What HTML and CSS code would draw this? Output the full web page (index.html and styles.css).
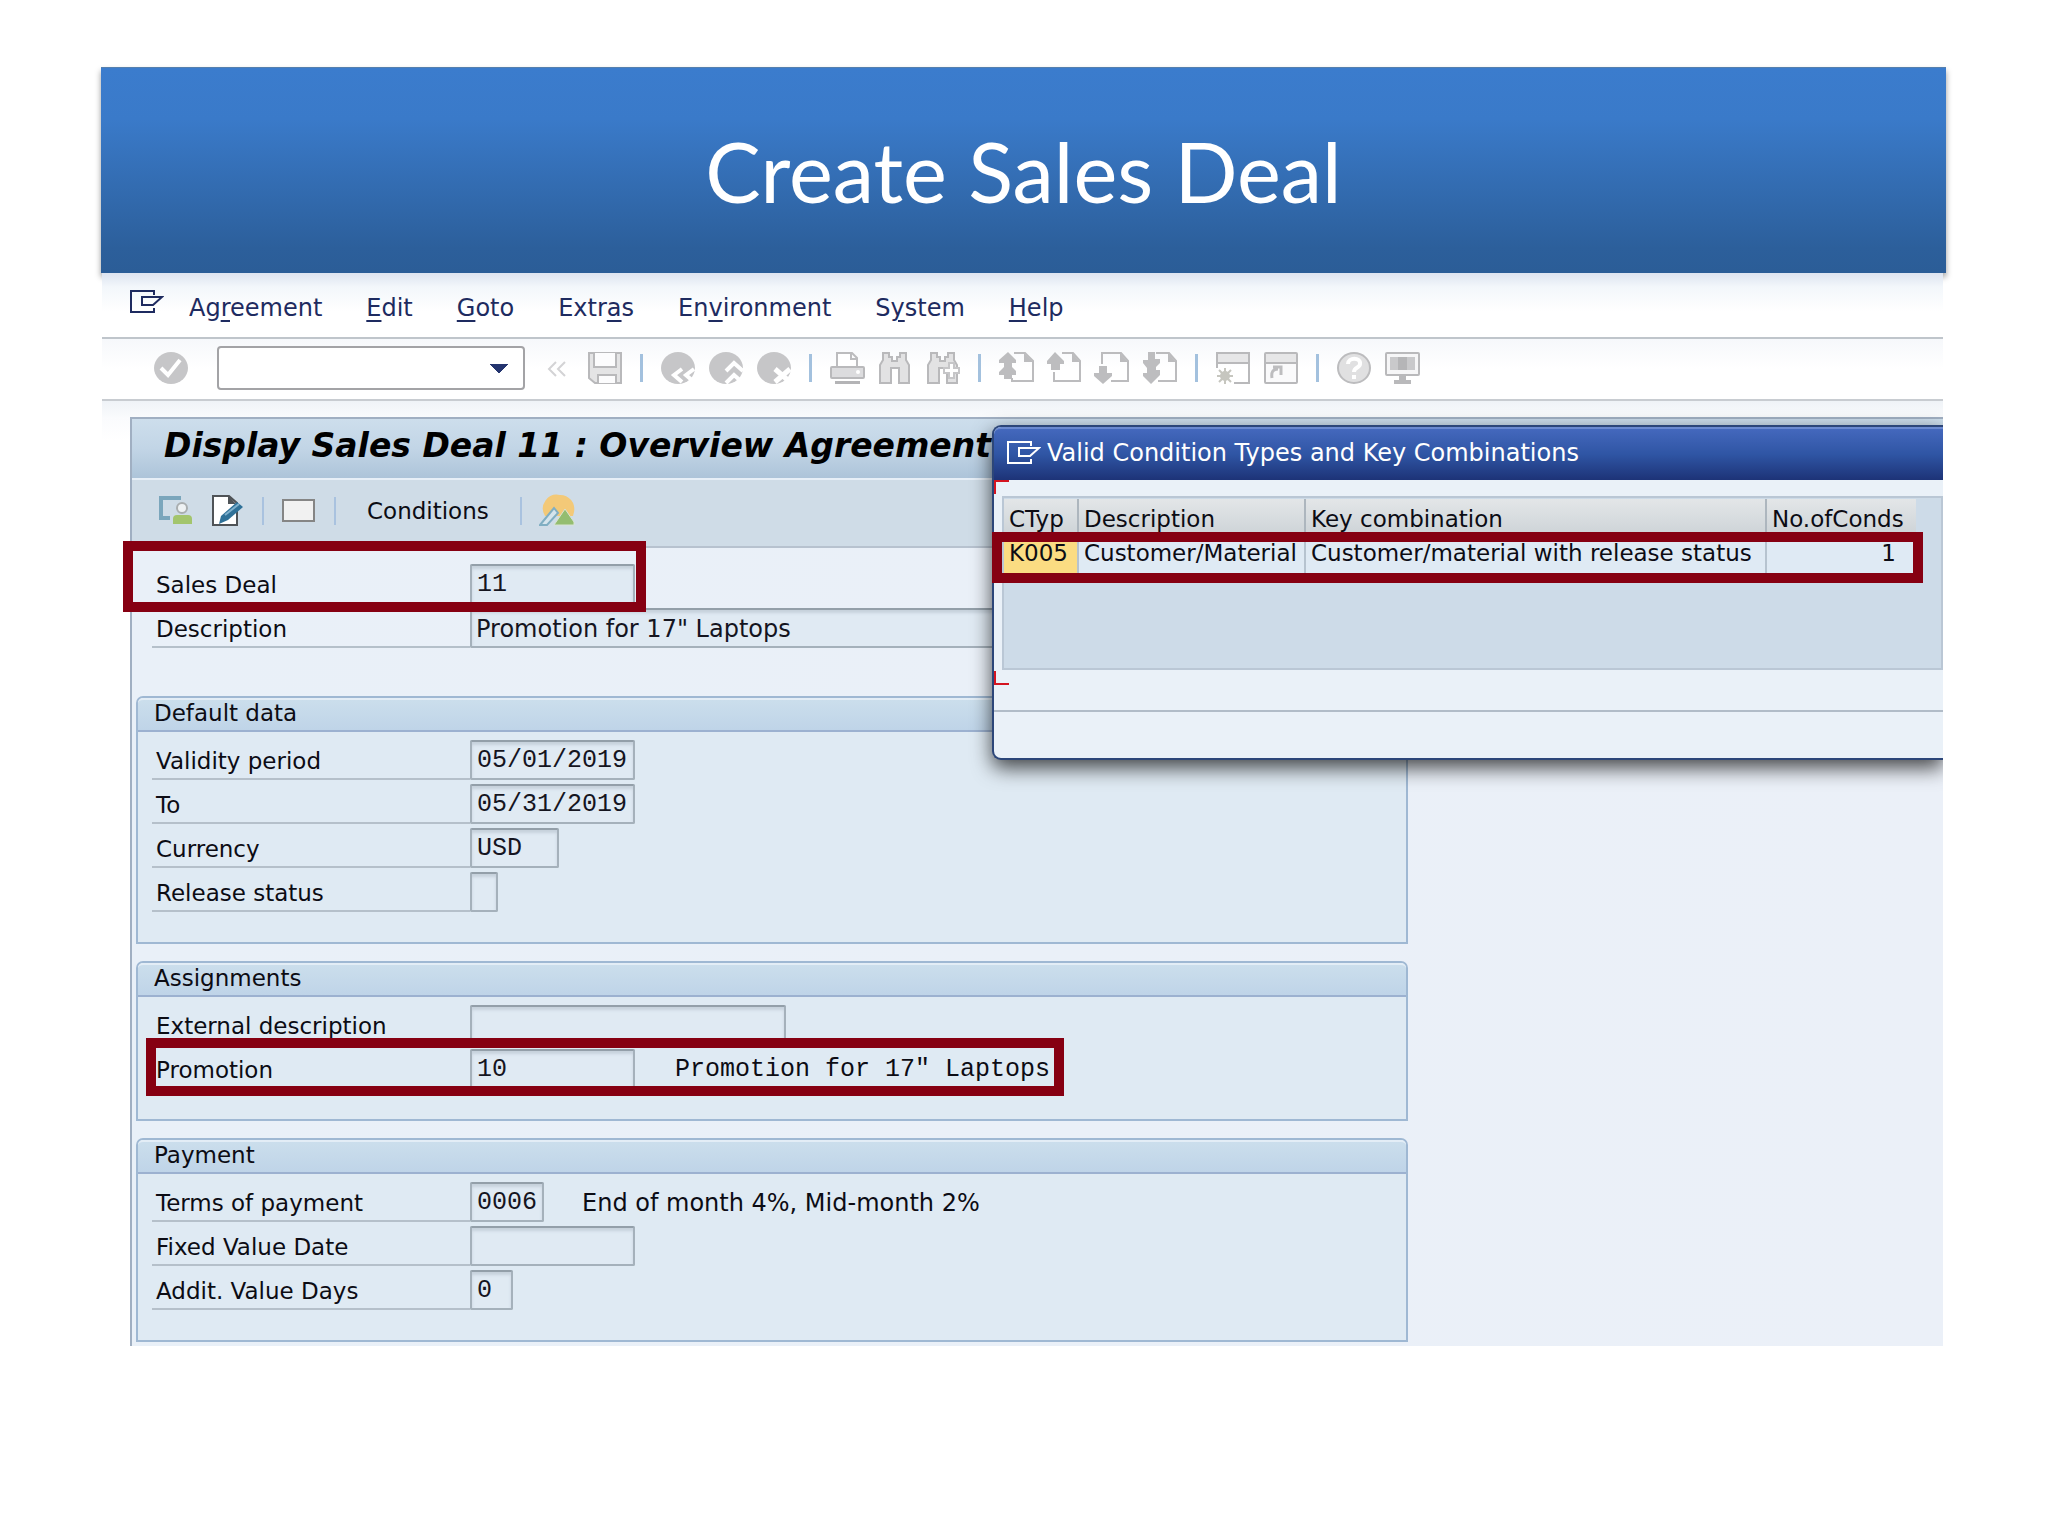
FILE: index.html
```html
<!DOCTYPE html>
<html lang="en">
<head>
<meta charset="utf-8">
<title>Create Sales Deal</title>
<link rel="stylesheet" href="styles.css">
</head>
<body>
<main class="slide">
  <header class="banner"><h1>Create Sales Deal</h1></header>
  <section class="screen">
    <nav class="menubar">
      <svg class="menu-icon" viewBox="0 0 34 24"><path d="M24 5V1H1V22H24V18M12 7H32L23 15H12Z"/></svg>
      <a href="#">Ag<u>r</u>eement</a>
      <a href="#"><u>E</u>dit</a>
      <a href="#"><u>G</u>oto</a>
      <a href="#">Extr<u>a</u>s</a>
      <a href="#">En<u>v</u>ironment</a>
      <a href="#">S<u>y</u>stem</a>
      <a href="#"><u>H</u>elp</a>
    </nav>

    <div class="toolbar">
      <button class="tool enter" aria-label="Enter"><svg viewBox="0 0 36 34"><ellipse cx="18" cy="17" rx="17" ry="16" fill="#c6c6c8"/><path d="M8 17l7 7L27 9" fill="none" stroke="#fff" stroke-width="4"/></svg></button>
      <select class="command" aria-label="Command"><option></option></select>
      <button class="tool collapse" aria-label="Collapse"><svg viewBox="0 0 20 34"><path d="M9 11L2 18l7 7M18 11l-7 7 7 7" fill="none" stroke="#d3d3d5" stroke-width="2"/></svg></button>
      <button class="tool" aria-label="Save"><svg viewBox="0 0 36 34"><path d="M2 2H34V32H8L2 27Z" fill="#e4e4e5" stroke="#b9b9bb" stroke-width="2"/><path d="M7 2V16H29V2M11 32V24H29V32" fill="#fcfcfd" stroke="#b9b9bb" stroke-width="2"/></svg></button>
      <span class="sep"></span>
      <button class="tool" aria-label="Back"><svg viewBox="0 0 36 34"><ellipse cx="18" cy="17" rx="17" ry="16" fill="#c6c6c8"/><path d="M22 18l-8 6 8 7M34 18l-8 6 8 7" fill="none" stroke="#fff" stroke-width="4"/></svg></button>
      <button class="tool" aria-label="Exit"><svg viewBox="0 0 36 34"><ellipse cx="18" cy="17" rx="17" ry="16" fill="#c6c6c8"/><path d="M18 20l8-8 9 8M18 32l8-8 9 8" fill="none" stroke="#fff" stroke-width="4"/></svg></button>
      <button class="tool" aria-label="Cancel"><svg viewBox="0 0 36 34"><ellipse cx="18" cy="17" rx="17" ry="16" fill="#c6c6c8"/><path d="M19 18L34 31M34 18L19 31" fill="none" stroke="#fff" stroke-width="5"/></svg></button>
      <span class="sep"></span>
      <button class="tool" aria-label="Print"><svg viewBox="0 0 36 34"><path d="M8 16V2H23L28 7V16M22 2V8H28" fill="#fff" stroke="#bcbcbe" stroke-width="2"/><rect x="2" y="16" width="33" height="11" rx="1" fill="#dcdcde" stroke="#b9b9bb" stroke-width="2"/><path d="M6 31.500H31" stroke="#b4b4b6" stroke-width="3"/><circle cx="29" cy="21" r="2" fill="#fff"/></svg></button>
      <button class="tool" aria-label="Find"><svg viewBox="0 0 36 34"><path d="M6 2H12V6H15V10H20V6H23V2H29V9L32 14V32H22V17H14V32H3V14L6 9Z" fill="#e2e2e3" stroke="#b9b9bb" stroke-width="2"/></svg></button>
      <button class="tool" aria-label="Find next"><svg viewBox="0 0 36 34"><path d="M6 2H12V6H15V10H20V6H23V2H29V9L32 14V32H22V17H14V32H3V14L6 9Z" fill="#e2e2e3" stroke="#b9b9bb" stroke-width="2"/><path d="M24 12H29V17H34V22H29V27H24V22H19V17H24Z" fill="#fff" stroke="#c6c6c8" stroke-width="2"/></svg></button>
      <span class="sep"></span>
      <button class="tool" aria-label="First page"><svg viewBox="0 0 36 34"><path d="M16 2H27L35 10V30H14V27" fill="none" stroke="#bcbcbe" stroke-width="2"/><path d="M26 2V11H35Z" fill="#bcbcbe"/><path d="M10 1L18 9V12H14V16L18 20V24H14V28H6V24H1V21L6 16V12H1V9Z" fill="#bdbdbf"/></svg></button>
      <button class="tool" aria-label="Previous page"><svg viewBox="0 0 36 34"><path d="M16 2H27L34 10V30H8V21" fill="none" stroke="#bcbcbe" stroke-width="2"/><path d="M26 2V11H34Z" fill="#bcbcbe"/><path d="M9 1L18 10V13H14V19H5V13H1V10Z" fill="#bdbdbf"/></svg></button>
      <button class="tool" aria-label="Next page"><svg viewBox="0 0 36 34"><path d="M8 13V2H27L34 10V30H17" fill="none" stroke="#bcbcbe" stroke-width="2"/><path d="M26 2V11H34Z" fill="#bcbcbe"/><path d="M5 15H13V22H18V25L9 33L0 25V22H5Z" fill="#bdbdbf"/></svg></button>
      <button class="tool" aria-label="Last page"><svg viewBox="0 0 36 34"><path d="M14 2H27L34 10V30H16" fill="none" stroke="#bcbcbe" stroke-width="2"/><path d="M26 2V11H34Z" fill="#bcbcbe"/><path d="M6 1H13V8H18V12L14 16V19H18V24L9 33L1 25V22H5V17L1 12V9H6Z" fill="#bdbdbf"/></svg></button>
      <span class="sep"></span>
      <button class="tool" aria-label="New session"><svg viewBox="0 0 36 34"><path d="M2 2H34V12H2Z" fill="#e6e6e7"/><path d="M2 17V2H34V32H19M2 12H34" fill="none" stroke="#b9b9bb" stroke-width="2"/><circle cx="10" cy="25" r="5" fill="#c6c6bf"/><path d="M10 17V33M2 25H18M4 19L16 31M16 19L4 31" stroke="#c6c6bf" stroke-width="2"/></svg></button>
      <button class="tool" aria-label="Shortcut"><svg viewBox="0 0 36 34"><rect x="2" y="2" width="32" height="30" rx="1" fill="#fafafb" stroke="#b9b9bb" stroke-width="2"/><path d="M3 3H33V12H3Z" fill="#e6e6e7"/><path d="M2 12H34" stroke="#b9b9bb" stroke-width="2"/><path d="M9 27C8 21 10 18 15 18M10 16H18V24" fill="none" stroke="#bdbdbf" stroke-width="3"/></svg></button>
      <span class="sep"></span>
      <button class="tool" aria-label="Help"><svg viewBox="0 0 36 34"><ellipse cx="18" cy="17" rx="16" ry="15" fill="#e0e0e1" stroke="#bcbcbe" stroke-width="2"/><path d="M12 13C12 6 25 6 24 13C24 17 18 16 18 21M18 24V28" fill="none" stroke="#fff" stroke-width="4"/></svg></button>
      <button class="tool" aria-label="Layout"><svg viewBox="0 0 36 34"><rect x="2" y="2" width="33" height="22" rx="1" fill="#f6f6f7" stroke="#b9b9bb" stroke-width="2"/><path d="M6 6H31V19H6Z" fill="#c9c9cb"/><path d="M14 6H23V19H14Z" fill="#b5b5b7"/><path d="M15 25H22V29H27V33H10V29H15Z" fill="#b9b9bb"/></svg></button>
    </div>

    <div class="workarea">
      <div class="panel">
        <h2 class="panel-title">Display Sales Deal 11 : Overview Agreement</h2>
        <div class="appbar">
          <button class="tool" aria-label="Other agreement"><svg viewBox="0 0 36 34"><path d="M24 4H4V24H13" fill="none" stroke="#7ba6bc" stroke-width="4"/><circle cx="25" cy="14" r="5" fill="#eef2f4" stroke="#a9aeb0" stroke-width="2"/><path d="M16 30V25Q16 21 20 21H31Q35 21 35 25V30Z" fill="#a3c56d"/></svg></button>
          <button class="tool" aria-label="Change"><svg viewBox="0 0 36 34"><path d="M4 2H20L28 9V31H4Z" fill="#fff" stroke="#4f5357" stroke-width="2"/><path d="M19 1V10H27Z" fill="#4f5357"/><path d="M10 30L12 22L28 8L34 13L19 26Z" fill="#2f7198"/><path d="M16 21L30 10" stroke="#7fb0cc" stroke-width="2"/></svg></button>
          <span class="sep"></span>
          <button class="tool" aria-label="Blank"><svg viewBox="0 0 36 34"><rect x="2" y="6" width="31" height="21" fill="#f1f1f1" stroke="#858585" stroke-width="2"/></svg></button>
          <span class="sep"></span>
          <button class="text-button">Conditions</button>
          <span class="sep"></span>
          <button class="tool" aria-label="Overview"><svg viewBox="0 0 36 34"><path d="M6 22A14 14 0 0 1 21 1A14 14 0 0 1 35 18L34 22Z" fill="#f3c978"/><path d="M1 31L15 14L19 19L8 31Z" fill="#d5e4ec" stroke="#80aec2" stroke-width="2"/><path d="M15 31L26 15L35 28V31Z" fill="#94bd70" stroke="#d9e3d4"/></svg></button>
        </div>

        <form class="content">
          <div class="rows head-rows">
            <div class="row"><label for="deal">Sales Deal</label><input id="deal" class="w-date" value="11" readonly></div>
            <div class="row"><label for="desc">Description</label><input id="desc" class="w-desc" value="Promotion for 17&quot; Laptops" readonly></div>
          </div>

          <section class="group">
            <h3>Default data</h3>
            <div class="rows">
              <div class="row"><label for="from">Validity period</label><input id="from" class="w-date" value="05/01/2019" readonly></div>
              <div class="row"><label for="to">To</label><input id="to" class="w-date" value="05/31/2019" readonly></div>
              <div class="row"><label for="cur">Currency</label><input id="cur" class="w-cur" value="USD" readonly></div>
              <div class="row"><label for="rel">Release status</label><input id="rel" class="w-flag" value="" readonly></div>
            </div>
          </section>

          <section class="group">
            <h3>Assignments</h3>
            <div class="rows">
              <div class="row"><label for="ext">External description</label><input id="ext" class="w-ext" value="" readonly></div>
              <div class="row"><label for="promo">Promotion</label><input id="promo" class="w-date" value="10" readonly><span class="note mono">Promotion for 17" Laptops</span></div>
            </div>
            <div class="mark mark-promo"></div>
          </section>

          <section class="group">
            <h3>Payment</h3>
            <div class="rows">
              <div class="row"><label for="terms">Terms of payment</label><input id="terms" class="w-terms" value="0006" readonly><span class="note">End of month 4%, Mid-month 2%</span></div>
              <div class="row"><label for="fixed">Fixed Value Date</label><input id="fixed" class="w-date" value="" readonly></div>
              <div class="row"><label for="days">Addit. Value Days</label><input id="days" class="w-days" value="0" readonly></div>
            </div>
          </section>
        </form>
      </div>
    </div>

    <div class="mark mark-deal"></div>

    <div class="popup-clip">
      <section class="popup" role="dialog" aria-label="Valid Condition Types and Key Combinations">
        <h2><svg class="menu-icon" viewBox="0 0 34 24"><path d="M24 5V1H1V22H24V18M12 7H32L23 15H12Z"/></svg>Valid Condition Types and Key Combinations</h2>
        <div class="popup-body">
          <div class="grid-wrap">
            <table>
              <colgroup><col class="c-type"><col class="c-desc"><col class="c-key"><col class="c-num"></colgroup>
              <thead><tr><th>CTyp</th><th>Description</th><th>Key combination</th><th>No.ofConds</th></tr></thead>
              <tbody><tr><td class="hit">K005</td><td>Customer/Material</td><td>Customer/material with release status</td><td class="num">1</td></tr></tbody>
            </table>
          </div>
        </div>
        <footer></footer>
        <div class="mark mark-row"></div>
      </section>
    </div>
  </section>
</main>
</body>
</html>
```
FILE: styles.css
```css
* { box-sizing: border-box; }

body {
  margin: 0;
  background: #fff;
  color: #0c0c14;
  font: 23px/30px "DejaVu Sans", Verdana, sans-serif;
}

h1, h2, h3 { margin: 0; font-weight: normal; }

.slide { padding: 67px 105px 190px 102px; }

.banner {
  display: flex;
  align-items: center;
  justify-content: center;
  height: 206px;
  margin: 0 -3px 0 -1px;
  background: linear-gradient(#3b7ccd, #3a7ac9 25%, #2c5f9b 88%, #2b5d97);
  border-top: 1px solid #5580ae;
  box-shadow: 0 4px 6px rgba(0, 0, 0, .4);
}
.banner h1 {
  color: #fff;
  font: 83px/100px Lato, Carlito, Calibri, sans-serif;
}

.screen { position: relative; background: #fff; }

/* menu bar */
.menubar {
  display: flex;
  align-items: center;
  gap: 44px;
  height: 66px;
  padding: 6px 28px 0;
  background: linear-gradient(#dde4f0, #f3f7fb 22%, #fff 60%);
  border-bottom: 2px solid #bfc5cb;
  font-size: 24px;
}
.menubar a { color: #1e2b60; text-decoration: none; }
.menubar u { text-underline-offset: 4px; text-decoration-thickness: 2px; }
.menu-icon {
  flex: none;
  width: 34px;
  height: 24px;
  fill: none;
  stroke: currentColor;
  stroke-width: 2;
}
.menubar .menu-icon { color: #1e2b60; margin: 0 -19px 12px 0; }

/* standard toolbar */
.toolbar {
  display: flex;
  align-items: center;
  gap: 12px;
  height: 62px;
  padding: 0 51px 2px;
  background: linear-gradient(#f6f8fb, #fff 50%);
  border-bottom: 2px solid #c8ccd1;
}
.tool {
  flex: none;
  width: 36px;
  height: 34px;
  padding: 0;
  border: 0;
  background: none;
}
.tool svg { display: block; width: 100%; height: 100%; }
.enter { margin-right: 16px; }
.collapse { width: 20px; margin: 0 8px 0 10px; }
.command {
  appearance: none;
  width: 308px;
  height: 44px;
  border: 2px solid #a3a3a6;
  border-radius: 4px;
  background:
    linear-gradient(to bottom right, #24356f 50%, transparent 51%) right 15px center / 9px 9px no-repeat,
    linear-gradient(to bottom left, #24356f 50%, transparent 51%) right 24px center / 9px 9px no-repeat,
    #fff;
}
.sep { flex: none; width: 13px; height: 28px; }
.sep::before { content: ""; display: block; width: 3px; height: 100%; margin: 0 auto; background: #a3c1de; }

/* work area */
.workarea {
  padding: 16px 0 0 28px;
  background: linear-gradient(#eff3f7, #fafbfd 17px, #fff 40px);
}
.panel { border: 2px solid #a0afc2; border-width: 2px 0 0 2px; background: #ebf1f8; }
.panel-title {
  height: 61px;
  padding: 7px 32px;
  border-bottom: 2px solid #e7eff7;
  background: linear-gradient(#cddeec, #c2d5e6 50%, #adc4d9);
  color: #000;
  font: italic bold 33px/40px "DejaVu Sans", Verdana, sans-serif;
  white-space: nowrap;
}
.appbar {
  display: flex;
  align-items: center;
  gap: 16px;
  height: 68px;
  padding: 0 25px 4px;
  background: #cfdce7;
  border-bottom: 2px solid #b7c2cf;
}
.appbar .sep { width: 4px; }
.appbar .sep::before { width: 2px; background: #a9c2df; }
.text-button {
  padding: 0 14px;
  border: 0;
  background: none;
  color: #0c0c14;
  font: inherit;
}

/* form */
.content { padding: 16px 4px 4px; background: linear-gradient(90deg, #e9f0f8, #ebf0f8); }
.rows { display: flex; flex-direction: column; gap: 4px; }
.head-rows { padding: 0 16px 48px; }
.row { display: flex; align-items: stretch; height: 40px; }
.row label {
  width: 318px;
  padding: 6px 4px 0;
  border-bottom: 2px solid #b5c0ca;
}
.row input {
  min-width: 0;
  height: 40px;
  padding: 0 5px;
  border: 2px solid #a5b1bb;
  border-top-color: #939fa9;
  border-radius: 2px;
  background: #e0eaf3;
  box-shadow: inset 0 3px 3px rgba(110, 125, 140, .22);
  color: #15151f;
  font: 25px/30px "Courier New", "Liberation Mono", monospace;
}
.row .w-desc { width: 620px; padding: 2px 4px 0; font: 24px/30px "DejaVu Sans", Verdana, sans-serif; }
.w-date { width: 165px; }
.w-cur { width: 89px; }
.w-flag { width: 28px; }
.w-ext { width: 316px; }
.w-terms { width: 74px; }
.w-days { width: 43px; }
.note { padding: 6px 0 0 38px; font-size: 24px; }
.note.mono { padding-left: 40px; font: 25px/30px "Courier New", "Liberation Mono", monospace; }

.group {
  position: relative;
  max-width: 1272px;
  margin-bottom: 17px;
  padding-bottom: 30px;
  border: 2px solid #9fb8d3;
  border-radius: 7px 7px 0 0;
  background: #dfeaf3;
}
.group:last-child { margin-bottom: 0; }
.group h3 {
  height: 34px;
  padding: 0 16px;
  border-top: 2px solid #e3edf6;
  border-bottom: 2px solid #9cb1d0;
  border-radius: 5px 5px 0 0;
  background: linear-gradient(#cbdeec, #bfd4e8);
  font-size: 23px;
  line-height: 26px;
}
.group .rows { padding: 8px 14px 0; }

/* highlight frames drawn over the screen */
.mark { position: absolute; border: 10px solid #860012; pointer-events: none; }
.mark-deal { left: 21px; top: 268px; width: 523px; height: 71px; }
.mark-promo { left: 8px; top: 75px; width: 918px; height: 58px; }
.mark-row { left: -2px; top: 105px; width: 931px; height: 51px; }

/* popup window */
.popup-clip {
  position: absolute;
  left: 850px;
  right: 0;
  top: 112px;
  overflow: hidden;
  padding: 40px 0 40px 40px;
  pointer-events: none;
}
.popup {
  position: relative;
  border: 2px solid #2c4679;
  border-right: 0;
  border-radius: 9px 0 0 9px;
  background: #eaf1f8;
  box-shadow: 0 8px 20px rgba(0, 0, 0, .7);
}
.popup h2 {
  display: flex;
  align-items: center;
  gap: 6px;
  height: 53px;
  padding: 0 13px 4px;
  border-top: 2px solid #6b8ad0;
  border-radius: 7px 0 0 0;
  background: linear-gradient(#4468bd, #2f55a4 50%, #1d3377);
  color: #fff;
  font-size: 24px;
  white-space: nowrap;
}
.popup-body {
  position: relative;
  height: 232px;
  padding: 16px 0 0 8px;
  border-bottom: 2px solid #b1bcc8;
}
.popup-body::before, .popup-body::after {
  content: "";
  position: absolute;
  left: 0;
  width: 13px;
  height: 12px;
  border: solid #d41420;
}
.popup-body::before { top: 0; border-width: 2px 0 0 2px; }
.popup-body::after { top: 191px; border-width: 0 0 2px 2px; }
.grid-wrap {
  height: 174px;
  padding-top: 1px;
  border: 2px solid #bac7d5;
  background: #cddbe8;
}
.popup footer { height: 46px; }
table { border-collapse: collapse; table-layout: fixed; width: 912px; }
.c-type { width: 74px; }
.c-desc { width: 227px; }
.c-key { width: 461px; }
.c-num { width: 150px; }
th, td { padding: 0 5px; text-align: left; font-weight: normal; white-space: nowrap; }
th { height: 38px; padding-top: 2px; background: linear-gradient(#e3e6e8, #ccd2d6); border-right: 2px solid #adb6be; }
td { height: 36px; padding-bottom: 4px; background: #dfeaf4; border-right: 2px solid #b6c3cf; }
th:last-child, td:last-child { border-right: 0; }
.hit { background: #fbdc82; }
.num { padding-right: 20px; text-align: right; }
```
